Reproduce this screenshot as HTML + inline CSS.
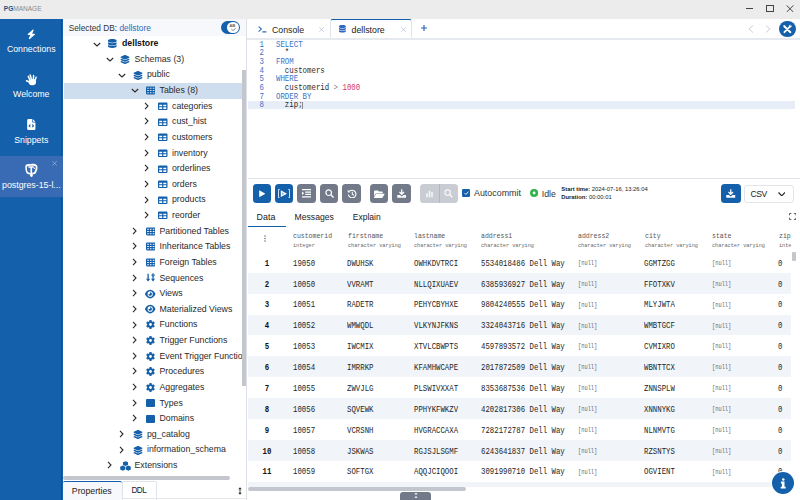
<!DOCTYPE html><html><head><meta charset="utf-8"><style>
*{box-sizing:border-box;margin:0;padding:0}
html,body{width:800px;height:500px;overflow:hidden;background:#fff}
body{position:relative;font-family:"Liberation Sans",sans-serif;color:#222;font-size:8.75px}
.a{position:absolute}
svg{display:block}
.t{position:absolute;white-space:nowrap;line-height:10px}
.m{font-family:"Liberation Mono",monospace}
.sitem{position:absolute;left:0;width:62.5px;text-align:center;font-size:8.75px;line-height:10px;color:#fff}
.tr{position:absolute;white-space:nowrap;font-size:8.75px;line-height:10px;color:#2a2a2a}
.btn{position:absolute;top:184.3px;width:18.6px;height:18.6px;border-radius:3.5px}
.bb{background:#1560aa}
.bg{background:#727a8a}
.hd{position:absolute;top:231px;font-family:"Liberation Mono",monospace;font-size:7.4px;line-height:9px;color:#555;transform:scaleX(0.88);transform-origin:0 0;white-space:nowrap}
.ty{position:absolute;top:242px;font-family:"Liberation Mono",monospace;font-size:6px;line-height:7px;color:#666;transform:scaleX(0.865);transform-origin:0 0;white-space:nowrap}
.c{position:absolute;font-family:"Liberation Mono",monospace;font-size:8.3px;line-height:9px;color:#1e1e1e;white-space:nowrap;transform:scaleX(0.885);transform-origin:0 0}
.nl{position:absolute;font-family:"Liberation Mono",monospace;font-size:6.3px;transform:scaleX(0.85);transform-origin:0 0;line-height:7px;color:#666;white-space:nowrap}
.rn{position:absolute;font-family:"Liberation Mono",monospace;font-size:8.3px;line-height:9px;color:#111;font-weight:bold;transform:scaleX(0.885);white-space:nowrap;text-align:center;width:20px}
.ed{position:absolute;font-family:"Liberation Mono",monospace;font-size:8.3px;line-height:8.7px;white-space:pre;transform:scaleX(0.89);transform-origin:0 0}
.kw{color:#3c73c7}
</style></head><body>
<div class="a" style="left:0;top:0;width:800px;height:18.75px;background:#ececec"></div>
<div class="t" style="left:3.8px;top:3.8px;font-size:6.6px;font-weight:bold;letter-spacing:-0.05px"><span style="color:#1f4f86">PG</span><span style="color:#8a8a8a;font-weight:normal">MANAGE</span></div>
<div class="a" style="left:746.2px;top:8px;width:7px;height:1.1px;background:#444"></div>
<div class="a" style="left:766px;top:4.6px;width:8px;height:7.6px;border:1.1px solid #444"></div>
<svg class="a" style="left:785.5px;top:4.8px" width="8" height="7.5" viewBox="0 0 8 7.5"><path d="M0.5 0.3L7.5 7.2M7.5 0.3L0.5 7.2" stroke="#444" stroke-width="1"/></svg>
<div class="a" style="left:0;top:18.75px;width:62.5px;height:481.25px;background:#1560aa"></div>
<div class="a" style="left:61.4px;top:18.75px;width:1.1px;height:481.25px;background:#0d4f98"></div>
<svg class="a" style="left:27px;top:29.3px" width="8.5" height="10.7" viewBox="0 0 448 512"><path fill="#fff" d="M349.4 44.6c5.9-13.7 1.4-29.7-10.6-38.5s-28.6-8-39.9 1.8l-256 224c-10 8.8-13.6 22.9-8.9 35.3S50.7 288 64 288H175.5L98.6 467.4c-5.9 13.7-1.4 29.7 10.6 38.5s28.6 8 39.9-1.8l256-224c10-8.8 13.6-22.9 8.9-35.3s-16.6-20.7-30-20.7H272.5L349.4 44.6z"/></svg>
<div class="sitem" style="top:44px">Connections</div>
<svg class="a" style="left:20px;top:70px" width="24" height="20" viewBox="20 70 24 20"><g stroke="#fff" stroke-linecap="round" fill="none"><path d="M30.2 81L28.3 76.4M31.6 80L30.2 75M33.3 80L33.6 75.6M34.9 81L36.1 77.3" stroke-width="1.5"/><path d="M30.5 82.6L26.6 80.8" stroke-width="1.7"/></g><ellipse cx="32.4" cy="82.2" rx="3.7" ry="3" transform="rotate(-12 32.4 82.2)" fill="#fff"/></svg>
<div class="sitem" style="top:89px">Welcome</div>
<svg class="a" style="left:27.3px;top:119px" width="8.6" height="11" viewBox="0 0 384 512"><path fill="#fff" d="M64 0C28.7 0 0 28.7 0 64V448c0 35.3 28.7 64 64 64H320c35.3 0 64-28.7 64-64V160H256c-17.7 0-32-14.3-32-32V0H64zM256 0V128H384L256 0zM153 289l-31 31 31 31c9.4 9.4 9.4 24.6 0 33.9s-24.6 9.4-33.9 0L71 337c-9.4-9.4-9.4-24.6 0-33.9l48-48c9.4-9.4 24.6-9.4 33.9 0s9.4 24.6 0 33.9zM265 255l48 48c9.4 9.4 9.4 24.6 0 33.9l-48 48c-9.4 9.4-24.6 9.4-33.9 0s-9.4-24.6 0-33.9l31-31-31-31c-9.4-9.4-9.4-24.6 0-33.9s24.6-9.4 33.9 0z"/></svg>
<div class="sitem" style="top:134.5px">Snippets</div>
<div class="a" style="left:0;top:155.6px;width:62.5px;height:41.4px;background:#386bb4"></div>
<svg class="a" style="left:52.4px;top:161px" width="5.2" height="4.8" viewBox="0 0 5 5"><path d="M0.3 0.3L4.7 4.7M4.7 0.3L0.3 4.7" stroke="#9bb3dc" stroke-width="0.8"/></svg>
<svg class="a" style="left:24px;top:163px" width="14" height="15" viewBox="24 163 14 15"><path fill="#fff" d="M25.3 166.6C25.3 164.2 28 163.7 30.6 164.2C32.2 163.5 36.6 163.6 37.3 166.1C37.9 168.6 37.1 171.1 35.9 172.9C35.1 174.1 34 174.3 33 174.1L32.7 176.1C32.4 177.4 30.6 177.4 30.3 176.1L30 174.6C28 174.6 26.7 173.9 26.1 172.1C25.4 170.1 25.2 168.1 25.3 166.6Z"/><path fill="#386bb4" d="M26.9 166.7C27.1 165.5 35.4 165.3 35.7 166.6C35.9 168.6 35.3 170.6 34.4 171.9C33.6 172.7 32.6 172.7 32.3 172.6L32 175.3H30.9L30.6 172.9C28.8 172.9 27.7 172.3 27.3 171.1C26.9 169.6 26.8 168.1 26.9 166.7Z"/><path fill="#fff" d="M28.4 166.3H33.8V167.7H32.1V176H30.4V167.7H28.4Z"/><circle cx="34.4" cy="168.2" r="0.7" fill="#fff"/></svg>
<div class="sitem" style="top:179.5px;text-align:left;left:2px;font-size:8.8px">postgres-15-l...</div>
<div class="a" style="left:62.5px;top:18.75px;width:183.5px;height:17px;background:#f6f8fc"></div>
<div class="t" style="left:68.7px;top:22.7px;color:#333;font-size:8.3px">Selected DB: <span style="color:#2e68b8">dellstore</span></div>
<div class="a" style="left:221px;top:20.7px;width:19.3px;height:13.7px;border-radius:7px;background:#1560aa"></div>
<div class="a" style="left:227.2px;top:21.9px;width:11.5px;height:11.3px;border-radius:6px;background:#fff"></div>
<div class="t" style="left:229.2px;top:22.6px;font-size:4.3px;line-height:5px;color:#666;font-weight:bold">AB</div>
<svg class="a" style="left:230.8px;top:27.5px" width="5" height="3" viewBox="0 0 5 3"><path d="M0.3 1L2 2.6 4.7 0.3" fill="none" stroke="#555" stroke-width="0.7"/></svg>
<div class="a" style="left:63.5px;top:82.9px;width:178.5px;height:15.7px;background:#cfdeee"></div>
<div class="a" style="left:62.5px;top:36px;width:179.5px;height:440px;overflow:hidden">
<svg class="a" style="left:30.9px;top:5.6px" width="8" height="5" viewBox="0 0 8 5"><path d="M0.8 1L4 4 7.2 1" fill="none" stroke="#2b2b2b" stroke-width="1.1"/></svg>
<svg class="a" style="left:45.8px;top:2.9px" width="8.6" height="9" viewBox="0 0 448 512" preserveAspectRatio="none"><path fill="#1560aa" d="M448 80v48c0 44.2-100.3 80-224 80S0 172.2 0 128V80C0 35.8 100.3 0 224 0S448 35.8 448 80zM393.2 214.7c20.8-7.4 39.9-16.9 54.8-28.6V288c0 44.2-100.3 80-224 80S0 332.2 0 288V186.1c14.9 11.8 34 21.2 54.8 28.6C99.7 230.7 159.5 240 224 240s124.3-9.3 169.2-25.3zM0 346.1c14.9 11.8 34 21.2 54.8 28.6C99.7 390.7 159.5 400 224 400s124.3-9.3 169.2-25.3c20.8-7.4 39.9-16.9 54.8-28.6V432c0 44.2-100.3 80-224 80S0 476.2 0 432V346.1z"/></svg>
<div class="tr" style="left:59.5px;top:2.2px;font-weight:bold;color:#111;">dellstore</div>
<svg class="a" style="left:43.4px;top:21.23px" width="8" height="5" viewBox="0 0 8 5"><path d="M0.8 1L4 4 7.2 1" fill="none" stroke="#2b2b2b" stroke-width="1.1"/></svg>
<svg class="a" style="left:57.8px;top:18.93px" width="10" height="9" viewBox="0 0 576 512" preserveAspectRatio="none"><path fill="#1560aa" d="M264.5 5.2c14.9-6.9 32.1-6.9 47 0l218.6 101c8.5 3.9 13.9 12.4 13.9 21.8s-5.4 17.9-13.9 21.8l-218.6 101c-14.9 6.9-32.1 6.9-47 0L45.9 149.8C37.4 145.8 32 137.3 32 128s5.4-17.9 13.9-21.8L264.5 5.2zM476.9 209.6l53.2 24.6c8.5 3.9 13.9 12.4 13.9 21.8s-5.4 17.9-13.9 21.8l-218.6 101c-14.9 6.9-32.1 6.9-47 0L45.9 277.8C37.4 273.8 32 265.3 32 256s5.4-17.9 13.9-21.8l53.2-24.6 152 70.2c23.4 10.8 50.4 10.8 73.8 0l152-70.2zm-152 198.2l152-70.2 53.2 24.6c8.5 3.9 13.9 12.4 13.9 21.8s-5.4 17.9-13.9 21.8l-218.6 101c-14.9 6.9-32.1 6.9-47 0L45.9 405.8C37.4 401.8 32 393.3 32 384s5.4-17.9 13.9-21.8l53.2-24.6 152 70.2c23.4 10.8 50.4 10.8 73.8 0z"/></svg>
<div class="tr" style="left:72.0px;top:17.82px;">Schemas (3)</div>
<svg class="a" style="left:55.9px;top:36.85px" width="8" height="5" viewBox="0 0 8 5"><path d="M0.8 1L4 4 7.2 1" fill="none" stroke="#2b2b2b" stroke-width="1.1"/></svg>
<svg class="a" style="left:70.3px;top:34.55px" width="10" height="9" viewBox="0 0 576 512" preserveAspectRatio="none"><path fill="#1560aa" d="M264.5 5.2c14.9-6.9 32.1-6.9 47 0l218.6 101c8.5 3.9 13.9 12.4 13.9 21.8s-5.4 17.9-13.9 21.8l-218.6 101c-14.9 6.9-32.1 6.9-47 0L45.9 149.8C37.4 145.8 32 137.3 32 128s5.4-17.9 13.9-21.8L264.5 5.2zM476.9 209.6l53.2 24.6c8.5 3.9 13.9 12.4 13.9 21.8s-5.4 17.9-13.9 21.8l-218.6 101c-14.9 6.9-32.1 6.9-47 0L45.9 277.8C37.4 273.8 32 265.3 32 256s5.4-17.9 13.9-21.8l53.2-24.6 152 70.2c23.4 10.8 50.4 10.8 73.8 0l152-70.2zm-152 198.2l152-70.2 53.2 24.6c8.5 3.9 13.9 12.4 13.9 21.8s-5.4 17.9-13.9 21.8l-218.6 101c-14.9 6.9-32.1 6.9-47 0L45.9 405.8C37.4 401.8 32 393.3 32 384s5.4-17.9 13.9-21.8l53.2-24.6 152 70.2c23.4 10.8 50.4 10.8 73.8 0z"/></svg>
<div class="tr" style="left:84.5px;top:33.45px;">public</div>
<svg class="a" style="left:68.4px;top:52.48px" width="8" height="5" viewBox="0 0 8 5"><path d="M0.8 1L4 4 7.2 1" fill="none" stroke="#2b2b2b" stroke-width="1.1"/></svg>
<svg class="a" style="left:83.1px;top:50.17px" width="9.6" height="9" viewBox="0 0 512 512" preserveAspectRatio="none"><path fill="#1560aa" d="M64 32C28.7 32 0 60.7 0 96V416c0 35.3 28.7 64 64 64H448c35.3 0 64-28.7 64-64V96c0-35.3-28.7-64-64-64H64zm88 64v64H64V96h88zm56 0h88v64H208V96zm240 0v64H360V96h88zM64 224h88v64H64V224zm232 0v64H208V224h88zm64 0h88v64H360V224zM152 352v64H64V352h88zm56 0h88v64H208V352zm240 0v64H360V352h88z"/></svg>
<div class="tr" style="left:97.0px;top:49.08px;">Tables (8)</div>
<svg class="a" style="left:81.8px;top:65.8px" width="5" height="8" viewBox="0 0 5 8"><path d="M1 0.8L4 4 1 7.2" fill="none" stroke="#2b2b2b" stroke-width="1.1"/></svg>
<svg class="a" style="left:95.6px;top:66.0px" width="9.5" height="8.5" viewBox="0 0 512 512" preserveAspectRatio="none"><path fill="#1560aa" d="M64 256V160H224v96H64zm0 64H224v96H64V320zm224 96V320H448v96H288zM448 256H288V160H448v96zM64 32C28.7 32 0 60.7 0 96V416c0 35.3 28.7 64 64 64H448c35.3 0 64-28.7 64-64V96c0-35.3-28.7-64-64-64H64z"/></svg>
<div class="tr" style="left:109.5px;top:64.7px;">categories</div>
<svg class="a" style="left:81.8px;top:81.42px" width="5" height="8" viewBox="0 0 5 8"><path d="M1 0.8L4 4 1 7.2" fill="none" stroke="#2b2b2b" stroke-width="1.1"/></svg>
<svg class="a" style="left:95.6px;top:81.62px" width="9.5" height="8.5" viewBox="0 0 512 512" preserveAspectRatio="none"><path fill="#1560aa" d="M64 256V160H224v96H64zm0 64H224v96H64V320zm224 96V320H448v96H288zM448 256H288V160H448v96zM64 32C28.7 32 0 60.7 0 96V416c0 35.3 28.7 64 64 64H448c35.3 0 64-28.7 64-64V96c0-35.3-28.7-64-64-64H64z"/></svg>
<div class="tr" style="left:109.5px;top:80.33px;">cust_hist</div>
<svg class="a" style="left:81.8px;top:97.05px" width="5" height="8" viewBox="0 0 5 8"><path d="M1 0.8L4 4 1 7.2" fill="none" stroke="#2b2b2b" stroke-width="1.1"/></svg>
<svg class="a" style="left:95.6px;top:97.25px" width="9.5" height="8.5" viewBox="0 0 512 512" preserveAspectRatio="none"><path fill="#1560aa" d="M64 256V160H224v96H64zm0 64H224v96H64V320zm224 96V320H448v96H288zM448 256H288V160H448v96zM64 32C28.7 32 0 60.7 0 96V416c0 35.3 28.7 64 64 64H448c35.3 0 64-28.7 64-64V96c0-35.3-28.7-64-64-64H64z"/></svg>
<div class="tr" style="left:109.5px;top:95.95px;">customers</div>
<svg class="a" style="left:81.8px;top:112.67px" width="5" height="8" viewBox="0 0 5 8"><path d="M1 0.8L4 4 1 7.2" fill="none" stroke="#2b2b2b" stroke-width="1.1"/></svg>
<svg class="a" style="left:95.6px;top:112.88px" width="9.5" height="8.5" viewBox="0 0 512 512" preserveAspectRatio="none"><path fill="#1560aa" d="M64 256V160H224v96H64zm0 64H224v96H64V320zm224 96V320H448v96H288zM448 256H288V160H448v96zM64 32C28.7 32 0 60.7 0 96V416c0 35.3 28.7 64 64 64H448c35.3 0 64-28.7 64-64V96c0-35.3-28.7-64-64-64H64z"/></svg>
<div class="tr" style="left:109.5px;top:111.58px;">inventory</div>
<svg class="a" style="left:81.8px;top:128.3px" width="5" height="8" viewBox="0 0 5 8"><path d="M1 0.8L4 4 1 7.2" fill="none" stroke="#2b2b2b" stroke-width="1.1"/></svg>
<svg class="a" style="left:95.6px;top:128.5px" width="9.5" height="8.5" viewBox="0 0 512 512" preserveAspectRatio="none"><path fill="#1560aa" d="M64 256V160H224v96H64zm0 64H224v96H64V320zm224 96V320H448v96H288zM448 256H288V160H448v96zM64 32C28.7 32 0 60.7 0 96V416c0 35.3 28.7 64 64 64H448c35.3 0 64-28.7 64-64V96c0-35.3-28.7-64-64-64H64z"/></svg>
<div class="tr" style="left:109.5px;top:127.2px;">orderlines</div>
<svg class="a" style="left:81.8px;top:143.93px" width="5" height="8" viewBox="0 0 5 8"><path d="M1 0.8L4 4 1 7.2" fill="none" stroke="#2b2b2b" stroke-width="1.1"/></svg>
<svg class="a" style="left:95.6px;top:144.12px" width="9.5" height="8.5" viewBox="0 0 512 512" preserveAspectRatio="none"><path fill="#1560aa" d="M64 256V160H224v96H64zm0 64H224v96H64V320zm224 96V320H448v96H288zM448 256H288V160H448v96zM64 32C28.7 32 0 60.7 0 96V416c0 35.3 28.7 64 64 64H448c35.3 0 64-28.7 64-64V96c0-35.3-28.7-64-64-64H64z"/></svg>
<div class="tr" style="left:109.5px;top:142.82px;">orders</div>
<svg class="a" style="left:81.8px;top:159.55px" width="5" height="8" viewBox="0 0 5 8"><path d="M1 0.8L4 4 1 7.2" fill="none" stroke="#2b2b2b" stroke-width="1.1"/></svg>
<svg class="a" style="left:95.6px;top:159.75px" width="9.5" height="8.5" viewBox="0 0 512 512" preserveAspectRatio="none"><path fill="#1560aa" d="M64 256V160H224v96H64zm0 64H224v96H64V320zm224 96V320H448v96H288zM448 256H288V160H448v96zM64 32C28.7 32 0 60.7 0 96V416c0 35.3 28.7 64 64 64H448c35.3 0 64-28.7 64-64V96c0-35.3-28.7-64-64-64H64z"/></svg>
<div class="tr" style="left:109.5px;top:158.45px;">products</div>
<svg class="a" style="left:81.8px;top:175.18px" width="5" height="8" viewBox="0 0 5 8"><path d="M1 0.8L4 4 1 7.2" fill="none" stroke="#2b2b2b" stroke-width="1.1"/></svg>
<svg class="a" style="left:95.6px;top:175.38px" width="9.5" height="8.5" viewBox="0 0 512 512" preserveAspectRatio="none"><path fill="#1560aa" d="M64 256V160H224v96H64zm0 64H224v96H64V320zm224 96V320H448v96H288zM448 256H288V160H448v96zM64 32C28.7 32 0 60.7 0 96V416c0 35.3 28.7 64 64 64H448c35.3 0 64-28.7 64-64V96c0-35.3-28.7-64-64-64H64z"/></svg>
<div class="tr" style="left:109.5px;top:174.07px;">reorder</div>
<svg class="a" style="left:69.3px;top:190.8px" width="5" height="8" viewBox="0 0 5 8"><path d="M1 0.8L4 4 1 7.2" fill="none" stroke="#2b2b2b" stroke-width="1.1"/></svg>
<svg class="a" style="left:83.1px;top:190.8px" width="9.6" height="9" viewBox="0 0 512 512" preserveAspectRatio="none"><path fill="#1560aa" d="M64 32C28.7 32 0 60.7 0 96V416c0 35.3 28.7 64 64 64H448c35.3 0 64-28.7 64-64V96c0-35.3-28.7-64-64-64H64zm88 64v64H64V96h88zm56 0h88v64H208V96zm240 0v64H360V96h88zM64 224h88v64H64V224zm232 0v64H208V224h88zm64 0h88v64H360V224zM152 352v64H64V352h88zm56 0h88v64H208V352zm240 0v64H360V352h88z"/></svg>
<div class="tr" style="left:97.0px;top:189.7px;">Partitioned Tables</div>
<svg class="a" style="left:69.3px;top:206.43px" width="5" height="8" viewBox="0 0 5 8"><path d="M1 0.8L4 4 1 7.2" fill="none" stroke="#2b2b2b" stroke-width="1.1"/></svg>
<svg class="a" style="left:83.1px;top:206.43px" width="9.6" height="9" viewBox="0 0 512 512" preserveAspectRatio="none"><path fill="#1560aa" d="M64 32C28.7 32 0 60.7 0 96V416c0 35.3 28.7 64 64 64H448c35.3 0 64-28.7 64-64V96c0-35.3-28.7-64-64-64H64zm88 64v64H64V96h88zm56 0h88v64H208V96zm240 0v64H360V96h88zM64 224h88v64H64V224zm232 0v64H208V224h88zm64 0h88v64H360V224zM152 352v64H64V352h88zm56 0h88v64H208V352zm240 0v64H360V352h88z"/></svg>
<div class="tr" style="left:97.0px;top:205.32px;">Inheritance Tables</div>
<svg class="a" style="left:69.3px;top:222.05px" width="5" height="8" viewBox="0 0 5 8"><path d="M1 0.8L4 4 1 7.2" fill="none" stroke="#2b2b2b" stroke-width="1.1"/></svg>
<svg class="a" style="left:83.1px;top:222.05px" width="9.6" height="9" viewBox="0 0 512 512" preserveAspectRatio="none"><path fill="#1560aa" d="M64 32C28.7 32 0 60.7 0 96V416c0 35.3 28.7 64 64 64H448c35.3 0 64-28.7 64-64V96c0-35.3-28.7-64-64-64H64zm88 64v64H64V96h88zm56 0h88v64H208V96zm240 0v64H360V96h88zM64 224h88v64H64V224zm232 0v64H208V224h88zm64 0h88v64H360V224zM152 352v64H64V352h88zm56 0h88v64H208V352zm240 0v64H360V352h88z"/></svg>
<div class="tr" style="left:97.0px;top:220.95px;">Foreign Tables</div>
<svg class="a" style="left:69.3px;top:237.68px" width="5" height="8" viewBox="0 0 5 8"><path d="M1 0.8L4 4 1 7.2" fill="none" stroke="#2b2b2b" stroke-width="1.1"/></svg>
<svg class="a" style="left:83.1px;top:236.97px" width="10" height="10" viewBox="0 0 10 10"><path d="M2.1 0.8V7.6" fill="none" stroke="#1560aa" stroke-width="1.3"/><path d="M0 5.8H4.2L2.1 8.6z" fill="#1560aa"/><path d="M7 0.8V7.6" fill="none" stroke="#1560aa" stroke-width="1.1"/><circle cx="7.1" cy="2.2" r="1.2" fill="none" stroke="#1560aa" stroke-width="0.9"/><path d="M5 5.8H9.1L7 8.6z" fill="#1560aa"/></svg>
<div class="tr" style="left:97.0px;top:236.57px;">Sequences</div>
<svg class="a" style="left:69.3px;top:253.3px" width="5" height="8" viewBox="0 0 5 8"><path d="M1 0.8L4 4 1 7.2" fill="none" stroke="#2b2b2b" stroke-width="1.1"/></svg>
<svg class="a" style="left:82.9px;top:252.6px" width="10.4" height="10" viewBox="0 0 576 512" preserveAspectRatio="none"><path fill="#1560aa" d="M288 32c-80.8 0-145.5 36.8-192.6 80.6C48.6 156 17.3 208 2.5 243.7c-3.3 7.9-3.3 16.7 0 24.6C17.3 304 48.6 356 95.4 399.4C142.5 443.2 207.2 480 288 480s145.5-36.8 192.6-80.6c46.8-43.5 78.1-95.4 93-131.1c3.3-7.9 3.3-16.7 0-24.6c-14.9-35.7-46.2-87.7-93-131.1C433.5 68.8 368.8 32 288 32zM144 256a144 144 0 1 1 288 0 144 144 0 1 1 -288 0zm144-64c0 35.3-28.7 64-64 64c-7.1 0-13.9-1.2-20.3-3.3c-5.5-1.8-11.9 1.6-11.7 7.4c.3 6.9 1.3 13.8 3.2 20.7c13.7 51.2 66.4 81.6 117.6 67.9s81.6-66.4 67.9-117.6c-11.1-41.5-47.8-69.4-88.6-71.1c-5.8-.2-9.2 6.1-7.4 11.7c2.100 6.4 3.3 13.2 3.3 20.3z"/></svg>
<div class="tr" style="left:97.0px;top:252.2px;">Views</div>
<svg class="a" style="left:69.3px;top:268.93px" width="5" height="8" viewBox="0 0 5 8"><path d="M1 0.8L4 4 1 7.2" fill="none" stroke="#2b2b2b" stroke-width="1.1"/></svg>
<svg class="a" style="left:82.9px;top:268.23px" width="10.4" height="10" viewBox="0 0 576 512" preserveAspectRatio="none"><path fill="#1560aa" d="M288 32c-80.8 0-145.5 36.8-192.6 80.6C48.6 156 17.3 208 2.5 243.7c-3.3 7.9-3.3 16.7 0 24.6C17.3 304 48.6 356 95.4 399.4C142.5 443.2 207.2 480 288 480s145.5-36.8 192.6-80.6c46.8-43.5 78.1-95.4 93-131.1c3.3-7.9 3.3-16.7 0-24.6c-14.9-35.7-46.2-87.7-93-131.1C433.5 68.8 368.8 32 288 32zM144 256a144 144 0 1 1 288 0 144 144 0 1 1 -288 0zm144-64c0 35.3-28.7 64-64 64c-7.1 0-13.9-1.2-20.3-3.3c-5.5-1.8-11.9 1.6-11.7 7.4c.3 6.9 1.3 13.8 3.2 20.7c13.7 51.2 66.4 81.6 117.6 67.9s81.6-66.4 67.9-117.6c-11.1-41.5-47.8-69.4-88.6-71.1c-5.8-.2-9.2 6.1-7.4 11.7c2.100 6.4 3.3 13.2 3.3 20.3z"/></svg>
<div class="tr" style="left:97.0px;top:267.82px;">Materialized Views</div>
<svg class="a" style="left:69.3px;top:284.55px" width="5" height="8" viewBox="0 0 5 8"><path d="M1 0.8L4 4 1 7.2" fill="none" stroke="#2b2b2b" stroke-width="1.1"/></svg>
<svg class="a" style="left:83.6px;top:284.45px" width="9" height="9" viewBox="0 0 512 512" preserveAspectRatio="none"><path fill="#1560aa" d="M495.9 166.6c3.2 8.7 .5 18.4-6.4 24.6l-43.3 39.4c1.1 8.3 1.7 16.8 1.7 25.4s-.6 17.1-1.7 25.4l43.3 39.4c6.9 6.2 9.6 15.9 6.4 24.6c-4.4 11.9-9.7 23.3-15.8 34.3l-4.7 8.1c-6.6 11-14 21.4-22.1 31.2c-5.9 7.2-15.7 9.6-24.5 6.8l-55.7-17.7c-13.4 10.3-28.200 18.9-44 25.4l-12.5 57.1c-2 9.1-9 16.3-18.2 17.8c-13.8 2.3-28 3.5-42.5 3.5s-28.7-1.2-42.5-3.5c-9.2-1.5-16.2-8.7-18.2-17.8l-12.5-57.1c-15.8-6.5-30.6-15.1-44-25.4L83.1 425.9c-8.8 2.8-18.6 .3-24.5-6.8c-8.1-9.8-15.5-20.2-22.1-31.2l-4.7-8.1c-6.1-11-11.4-22.4-15.8-34.3c-3.2-8.7-.5-18.4 6.4-24.6l43.3-39.4C64.6 273.1 64 264.6 64 256s.6-17.1 1.7-25.4L22.4 191.2c-6.9-6.2-9.6-15.9-6.4-24.6c4.4-11.9 9.7-23.3 15.8-34.3l4.7-8.1c6.6-11 14-21.4 22.1-31.2c5.9-7.2 15.7-9.6 24.5-6.8l55.7 17.7c13.4-10.3 28.2-18.9 44-25.4l12.5-57.1c2-9.1 9-16.3 18.2-17.8C227.3 1.2 241.5 0 256 0s28.7 1.2 42.5 3.5c9.2 1.5 16.2 8.7 18.2 17.8l12.5 57.1c15.8 6.5 30.6 15.1 44 25.4l55.7-17.7c8.8-2.8 18.6-.3 24.5 6.8c8.1 9.8 15.5 20.2 22.1 31.2l4.7 8.1c6.1 11 11.4 22.4 15.8 34.3zM256 336a80 80 0 1 0 0-160 80 80 0 1 0 0 160z"/></svg>
<div class="tr" style="left:97.0px;top:283.45px;">Functions</div>
<svg class="a" style="left:69.3px;top:300.18px" width="5" height="8" viewBox="0 0 5 8"><path d="M1 0.8L4 4 1 7.2" fill="none" stroke="#2b2b2b" stroke-width="1.1"/></svg>
<svg class="a" style="left:83.6px;top:300.07px" width="9" height="9" viewBox="0 0 512 512" preserveAspectRatio="none"><path fill="#1560aa" d="M495.9 166.6c3.2 8.7 .5 18.4-6.4 24.6l-43.3 39.4c1.1 8.3 1.7 16.8 1.7 25.4s-.6 17.1-1.7 25.4l43.3 39.4c6.9 6.2 9.6 15.9 6.4 24.6c-4.4 11.9-9.7 23.3-15.8 34.3l-4.7 8.1c-6.6 11-14 21.4-22.1 31.2c-5.9 7.2-15.7 9.6-24.5 6.8l-55.7-17.7c-13.4 10.3-28.200 18.9-44 25.4l-12.5 57.1c-2 9.1-9 16.3-18.2 17.8c-13.8 2.3-28 3.5-42.5 3.5s-28.7-1.2-42.5-3.5c-9.2-1.5-16.2-8.7-18.2-17.8l-12.5-57.1c-15.8-6.5-30.6-15.1-44-25.4L83.1 425.9c-8.8 2.8-18.6 .3-24.5-6.8c-8.1-9.8-15.5-20.2-22.1-31.2l-4.7-8.1c-6.1-11-11.4-22.4-15.8-34.3c-3.2-8.7-.5-18.4 6.4-24.6l43.3-39.4C64.6 273.1 64 264.6 64 256s.6-17.1 1.7-25.4L22.4 191.2c-6.9-6.2-9.6-15.9-6.4-24.6c4.4-11.9 9.7-23.3 15.8-34.3l4.7-8.1c6.6-11 14-21.4 22.1-31.2c5.9-7.2 15.7-9.6 24.5-6.8l55.7 17.7c13.4-10.3 28.2-18.9 44-25.4l12.5-57.1c2-9.1 9-16.3 18.2-17.8C227.3 1.2 241.5 0 256 0s28.7 1.2 42.5 3.5c9.2 1.5 16.2 8.7 18.2 17.8l12.5 57.1c15.8 6.5 30.6 15.1 44 25.4l55.7-17.7c8.8-2.8 18.6-.3 24.5 6.8c8.1 9.8 15.5 20.2 22.1 31.2l4.7 8.1c6.1 11 11.4 22.4 15.8 34.3zM256 336a80 80 0 1 0 0-160 80 80 0 1 0 0 160z"/></svg>
<div class="tr" style="left:97.0px;top:299.07px;">Trigger Functions</div>
<svg class="a" style="left:69.3px;top:315.8px" width="5" height="8" viewBox="0 0 5 8"><path d="M1 0.8L4 4 1 7.2" fill="none" stroke="#2b2b2b" stroke-width="1.1"/></svg>
<svg class="a" style="left:83.6px;top:315.7px" width="9" height="9" viewBox="0 0 512 512" preserveAspectRatio="none"><path fill="#1560aa" d="M495.9 166.6c3.2 8.7 .5 18.4-6.4 24.6l-43.3 39.4c1.1 8.3 1.7 16.8 1.7 25.4s-.6 17.1-1.7 25.4l43.3 39.4c6.9 6.2 9.6 15.9 6.4 24.6c-4.4 11.9-9.7 23.3-15.8 34.3l-4.7 8.1c-6.6 11-14 21.4-22.1 31.2c-5.9 7.2-15.7 9.6-24.5 6.8l-55.7-17.7c-13.4 10.3-28.200 18.9-44 25.4l-12.5 57.1c-2 9.1-9 16.3-18.2 17.8c-13.8 2.3-28 3.5-42.5 3.5s-28.7-1.2-42.5-3.5c-9.2-1.5-16.2-8.7-18.2-17.8l-12.5-57.1c-15.8-6.5-30.6-15.1-44-25.4L83.1 425.9c-8.8 2.8-18.6 .3-24.5-6.8c-8.1-9.8-15.5-20.2-22.1-31.2l-4.7-8.1c-6.1-11-11.4-22.4-15.8-34.3c-3.2-8.7-.5-18.4 6.4-24.6l43.3-39.4C64.6 273.1 64 264.6 64 256s.6-17.1 1.7-25.4L22.4 191.2c-6.9-6.2-9.6-15.9-6.4-24.6c4.4-11.9 9.7-23.3 15.8-34.3l4.7-8.1c6.6-11 14-21.4 22.1-31.2c5.9-7.2 15.7-9.6 24.5-6.8l55.7 17.7c13.4-10.3 28.2-18.9 44-25.4l12.5-57.1c2-9.1 9-16.3 18.2-17.8C227.3 1.2 241.5 0 256 0s28.7 1.2 42.5 3.5c9.2 1.5 16.2 8.7 18.2 17.8l12.5 57.1c15.8 6.5 30.6 15.1 44 25.4l55.7-17.7c8.8-2.8 18.6-.3 24.5 6.8c8.1 9.8 15.5 20.2 22.1 31.2l4.7 8.1c6.1 11 11.4 22.4 15.8 34.3zM256 336a80 80 0 1 0 0-160 80 80 0 1 0 0 160z"/></svg>
<div class="tr" style="left:97.0px;top:314.7px;">Event Trigger Functions</div>
<svg class="a" style="left:69.3px;top:331.43px" width="5" height="8" viewBox="0 0 5 8"><path d="M1 0.8L4 4 1 7.2" fill="none" stroke="#2b2b2b" stroke-width="1.1"/></svg>
<svg class="a" style="left:83.6px;top:331.32px" width="9" height="9" viewBox="0 0 512 512" preserveAspectRatio="none"><path fill="#1560aa" d="M495.9 166.6c3.2 8.7 .5 18.4-6.4 24.6l-43.3 39.4c1.1 8.3 1.7 16.8 1.7 25.4s-.6 17.1-1.7 25.4l43.3 39.4c6.9 6.2 9.6 15.9 6.4 24.6c-4.4 11.9-9.7 23.3-15.8 34.3l-4.7 8.1c-6.6 11-14 21.4-22.1 31.2c-5.9 7.2-15.7 9.6-24.5 6.8l-55.7-17.7c-13.4 10.3-28.200 18.9-44 25.4l-12.5 57.1c-2 9.1-9 16.3-18.2 17.8c-13.8 2.3-28 3.5-42.5 3.5s-28.7-1.2-42.5-3.5c-9.2-1.5-16.2-8.7-18.2-17.8l-12.5-57.1c-15.8-6.5-30.6-15.1-44-25.4L83.1 425.9c-8.8 2.8-18.6 .3-24.5-6.8c-8.1-9.8-15.5-20.2-22.1-31.2l-4.7-8.1c-6.1-11-11.4-22.4-15.8-34.3c-3.2-8.7-.5-18.4 6.4-24.6l43.3-39.4C64.6 273.1 64 264.6 64 256s.6-17.1 1.7-25.4L22.4 191.2c-6.9-6.2-9.6-15.9-6.4-24.6c4.4-11.9 9.7-23.3 15.8-34.3l4.7-8.1c6.6-11 14-21.4 22.1-31.2c5.9-7.2 15.7-9.6 24.5-6.8l55.7 17.7c13.4-10.3 28.2-18.9 44-25.4l12.5-57.1c2-9.1 9-16.3 18.2-17.8C227.3 1.2 241.5 0 256 0s28.7 1.2 42.5 3.5c9.2 1.5 16.2 8.7 18.2 17.8l12.5 57.1c15.8 6.5 30.6 15.1 44 25.4l55.7-17.7c8.8-2.8 18.6-.3 24.5 6.8c8.1 9.8 15.5 20.2 22.1 31.2l4.7 8.1c6.1 11 11.4 22.4 15.8 34.3zM256 336a80 80 0 1 0 0-160 80 80 0 1 0 0 160z"/></svg>
<div class="tr" style="left:97.0px;top:330.32px;">Procedures</div>
<svg class="a" style="left:69.3px;top:347.05px" width="5" height="8" viewBox="0 0 5 8"><path d="M1 0.8L4 4 1 7.2" fill="none" stroke="#2b2b2b" stroke-width="1.1"/></svg>
<svg class="a" style="left:83.6px;top:346.95px" width="9" height="9" viewBox="0 0 512 512" preserveAspectRatio="none"><path fill="#1560aa" d="M495.9 166.6c3.2 8.7 .5 18.4-6.4 24.6l-43.3 39.4c1.1 8.3 1.7 16.8 1.7 25.4s-.6 17.1-1.7 25.4l43.3 39.4c6.9 6.2 9.6 15.9 6.4 24.6c-4.4 11.9-9.7 23.3-15.8 34.3l-4.7 8.1c-6.6 11-14 21.4-22.1 31.2c-5.9 7.2-15.7 9.6-24.5 6.8l-55.7-17.7c-13.4 10.3-28.200 18.9-44 25.4l-12.5 57.1c-2 9.1-9 16.3-18.2 17.8c-13.8 2.3-28 3.5-42.5 3.5s-28.7-1.2-42.5-3.5c-9.2-1.5-16.2-8.7-18.2-17.8l-12.5-57.1c-15.8-6.5-30.6-15.1-44-25.4L83.1 425.9c-8.8 2.8-18.6 .3-24.5-6.8c-8.1-9.8-15.5-20.2-22.1-31.2l-4.7-8.1c-6.1-11-11.4-22.4-15.8-34.3c-3.2-8.7-.5-18.4 6.4-24.6l43.3-39.4C64.6 273.1 64 264.6 64 256s.6-17.1 1.7-25.4L22.4 191.2c-6.9-6.2-9.6-15.9-6.4-24.6c4.4-11.9 9.7-23.3 15.8-34.3l4.7-8.1c6.6-11 14-21.4 22.1-31.2c5.9-7.2 15.7-9.6 24.5-6.8l55.7 17.7c13.4-10.3 28.2-18.9 44-25.4l12.5-57.1c2-9.1 9-16.3 18.2-17.8C227.3 1.2 241.5 0 256 0s28.7 1.2 42.5 3.5c9.2 1.5 16.2 8.7 18.2 17.8l12.5 57.1c15.8 6.5 30.6 15.1 44 25.4l55.7-17.7c8.8-2.8 18.6-.3 24.5 6.8c8.1 9.8 15.5 20.2 22.1 31.2l4.7 8.1c6.1 11 11.4 22.4 15.8 34.3zM256 336a80 80 0 1 0 0-160 80 80 0 1 0 0 160z"/></svg>
<div class="tr" style="left:97.0px;top:345.95px;">Aggregates</div>
<svg class="a" style="left:69.3px;top:362.68px" width="5" height="8" viewBox="0 0 5 8"><path d="M1 0.8L4 4 1 7.2" fill="none" stroke="#2b2b2b" stroke-width="1.1"/></svg>
<div class="a" style="left:83.9px;top:362.98px;width:8.2px;height:8.2px;border-radius:1px;background:#1560aa"></div>
<div class="tr" style="left:97.0px;top:361.57px;">Types</div>
<svg class="a" style="left:69.3px;top:378.3px" width="5" height="8" viewBox="0 0 5 8"><path d="M1 0.8L4 4 1 7.2" fill="none" stroke="#2b2b2b" stroke-width="1.1"/></svg>
<div class="a" style="left:83.9px;top:378.6px;width:8.2px;height:8.2px;border-radius:1px;background:#1560aa"></div>
<div class="tr" style="left:97.0px;top:377.2px;">Domains</div>
<svg class="a" style="left:56.8px;top:393.93px" width="5" height="8" viewBox="0 0 5 8"><path d="M1 0.8L4 4 1 7.2" fill="none" stroke="#2b2b2b" stroke-width="1.1"/></svg>
<svg class="a" style="left:70.3px;top:393.93px" width="10" height="9" viewBox="0 0 576 512" preserveAspectRatio="none"><path fill="#1560aa" d="M264.5 5.2c14.9-6.9 32.1-6.9 47 0l218.6 101c8.5 3.9 13.9 12.4 13.9 21.8s-5.4 17.9-13.9 21.8l-218.6 101c-14.9 6.9-32.1 6.9-47 0L45.9 149.8C37.4 145.8 32 137.3 32 128s5.4-17.9 13.9-21.8L264.5 5.2zM476.9 209.6l53.2 24.6c8.5 3.9 13.9 12.4 13.9 21.8s-5.4 17.9-13.9 21.8l-218.6 101c-14.9 6.9-32.1 6.9-47 0L45.9 277.8C37.4 273.8 32 265.3 32 256s5.4-17.9 13.9-21.8l53.2-24.6 152 70.2c23.4 10.8 50.4 10.8 73.8 0l152-70.2zm-152 198.2l152-70.2 53.2 24.6c8.5 3.9 13.9 12.4 13.9 21.8s-5.4 17.9-13.9 21.8l-218.6 101c-14.9 6.9-32.1 6.9-47 0L45.9 405.8C37.4 401.8 32 393.3 32 384s5.4-17.9 13.9-21.8l53.2-24.6 152 70.2c23.4 10.8 50.4 10.8 73.8 0z"/></svg>
<div class="tr" style="left:84.5px;top:392.82px;">pg_catalog</div>
<svg class="a" style="left:56.8px;top:409.55px" width="5" height="8" viewBox="0 0 5 8"><path d="M1 0.8L4 4 1 7.2" fill="none" stroke="#2b2b2b" stroke-width="1.1"/></svg>
<svg class="a" style="left:70.3px;top:409.55px" width="10" height="9" viewBox="0 0 576 512" preserveAspectRatio="none"><path fill="#1560aa" d="M264.5 5.2c14.9-6.9 32.1-6.9 47 0l218.6 101c8.5 3.9 13.9 12.4 13.9 21.8s-5.4 17.9-13.9 21.8l-218.6 101c-14.9 6.9-32.1 6.9-47 0L45.9 149.8C37.4 145.8 32 137.3 32 128s5.4-17.9 13.9-21.8L264.5 5.2zM476.9 209.6l53.2 24.6c8.5 3.9 13.9 12.4 13.9 21.8s-5.4 17.9-13.9 21.8l-218.6 101c-14.9 6.9-32.1 6.9-47 0L45.9 277.8C37.4 273.8 32 265.3 32 256s5.4-17.9 13.9-21.8l53.2-24.6 152 70.2c23.4 10.8 50.4 10.8 73.8 0l152-70.2zm-152 198.2l152-70.2 53.2 24.6c8.5 3.9 13.9 12.4 13.9 21.8s-5.4 17.9-13.9 21.8l-218.6 101c-14.9 6.9-32.1 6.9-47 0L45.9 405.8C37.4 401.8 32 393.3 32 384s5.4-17.9 13.9-21.8l53.2-24.6 152 70.2c23.4 10.8 50.4 10.8 73.8 0z"/></svg>
<div class="tr" style="left:84.5px;top:408.45px;">information_schema</div>
<svg class="a" style="left:44.3px;top:425.18px" width="5" height="8" viewBox="0 0 5 8"><path d="M1 0.8L4 4 1 7.2" fill="none" stroke="#2b2b2b" stroke-width="1.1"/></svg>
<svg class="a" style="left:57.6px;top:424.88px" width="11" height="10" viewBox="0 0 11 10"><path fill="#1560aa" d="M5.5 0.2L8 1.3V4L5.5 5.1 3 4V1.3zM2.7 4.6L5.2 5.7V8.6L2.7 9.8 0.2 8.6V5.7zM8.3 4.6L10.8 5.7V8.6L8.3 9.8 5.8 8.6V5.7z"/></svg>
<div class="tr" style="left:72.0px;top:424.07px;">Extensions</div>
</div>
<div class="a" style="left:242px;top:70.2px;width:4.1px;height:315.5px;background:#c3c7cd"></div>
<div class="a" style="left:63px;top:476px;width:167px;height:3.8px;border-radius:2px;background:#c3c7cd"></div>
<div class="a" style="left:62.5px;top:481.2px;width:59.7px;height:19px;background:#f6f8fc;border-top:1.2px solid #1560aa;border-radius:2px 2px 0 0"></div>
<div class="a" style="left:122.2px;top:481.2px;width:35px;height:19px;border:1px solid #dfe3ea;border-bottom:none;border-radius:2px 2px 0 0"></div>
<div class="a" style="left:122.2px;top:497.5px;width:124px;height:1px;background:#e3e6eb"></div>
<div class="t" style="left:71.8px;top:486px;color:#222">Properties</div>
<div class="t" style="left:131.5px;top:486px;color:#222;font-size:8.2px;letter-spacing:-0.6px">DDL</div>
<svg class="a" style="left:237.7px;top:486.8px" width="4" height="8" viewBox="0 0 4 8"><path d="M2 1V7" fill="none" stroke="#333" stroke-width="0.9"/><path d="M0.2 2.3L2 0.2 3.8 2.3zM0.2 5.7L2 7.8 3.8 5.7z" fill="#333"/></svg>
<div class="a" style="left:246.2px;top:18.75px;width:1px;height:481.25px;background:#dde1e7"></div>
<svg class="a" style="left:257.5px;top:26.2px" width="9" height="7" viewBox="0 0 9 7"><path d="M0.6 0.6L3.4 3.1 0.6 5.6M4.3 5.9H8.4" fill="none" stroke="#2f68c0" stroke-width="1.1"/></svg>
<div class="t" style="left:272px;top:25px;color:#1e1e1e;font-size:8.75px">Console</div>
<svg class="a" style="left:319.3px;top:26.5px" width="5.2" height="5.2" viewBox="0 0 5 5"><path d="M0.3 0.3L4.7 4.7M4.7 0.3L0.3 4.7" stroke="#b8c6dc" stroke-width="0.8"/></svg>
<div class="a" style="left:330.3px;top:19.1px;width:81.5px;height:20px;background:#fff;border:1px solid #dfe3ea;border-top:1.3px solid #1560aa;border-bottom:none;border-radius:2.5px 2.5px 0 0"></div>
<div class="a" style="left:247.2px;top:37.75px;width:552.8px;height:1.9px;background:#e6e9ee"></div>
<svg class="a" style="left:339.3px;top:25.4px" width="6.8" height="7.6" viewBox="0 0 448 512" preserveAspectRatio="none"><path fill="#2f68c0" d="M448 80v48c0 44.2-100.3 80-224 80S0 172.2 0 128V80C0 35.8 100.3 0 224 0S448 35.8 448 80zM393.2 214.7c20.8-7.4 39.9-16.9 54.8-28.6V288c0 44.2-100.3 80-224 80S0 332.2 0 288V186.1c14.9 11.8 34 21.2 54.8 28.6C99.7 230.7 159.5 240 224 240s124.3-9.3 169.2-25.3zM0 346.1c14.9 11.8 34 21.2 54.8 28.6C99.7 390.7 159.5 400 224 400s124.3-9.3 169.2-25.3c20.8-7.4 39.9-16.9 54.8-28.6V432c0 44.2-100.3 80-224 80S0 476.2 0 432V346.1z"/></svg>
<div class="t" style="left:351.6px;top:25px;color:#1a1a1a;font-size:8.75px">dellstore</div>
<svg class="a" style="left:400.8px;top:26.5px" width="5.2" height="5.2" viewBox="0 0 5 5"><path d="M0.3 0.3L4.7 4.7M4.7 0.3L0.3 4.7" stroke="#b8c6dc" stroke-width="0.8"/></svg>
<svg class="a" style="left:421px;top:25.2px" width="6" height="6" viewBox="0 0 6 6"><path d="M3 0V6M0 3H6" stroke="#2f68c0" stroke-width="1.2"/></svg>
<svg class="a" style="left:747.5px;top:25px" width="6" height="8" viewBox="0 0 6 8"><path d="M5 0.5L1 4 5 7.5" fill="none" stroke="#c5cad3" stroke-width="0.9"/></svg>
<svg class="a" style="left:764.5px;top:25px" width="6" height="8" viewBox="0 0 6 8"><path d="M1 0.5L5 4 1 7.5" fill="none" stroke="#c5cad3" stroke-width="0.9"/></svg>
<div class="a" style="left:779px;top:20.7px;width:16.8px;height:16.6px;border-radius:50%;background:#1560aa"></div>
<svg class="a" style="left:782px;top:24px" width="10" height="10" viewBox="782 24 10 10"><path d="M784.2 26.2L790.4 32.2M790.2 26.4L784.4 32.2" stroke="#fff" stroke-width="1.9" stroke-linecap="round"/><path d="M783.4 25.4L785.2 25.6 785 27.2z" fill="#fff"/><circle cx="790.4" cy="26" r="1.3" fill="#fff"/><circle cx="791" cy="25.4" r="0.55" fill="#1560aa"/></svg>
<div class="a" style="left:248px;top:100.8px;width:547px;height:8px;background:#e8eef7"></div>
<div class="ed" style="left:255.4px;top:40.50px;width:10px;text-align:right;color:#3c73c7">1</div>
<div class="ed" style="left:275.5px;top:40.50px;color:#3c73c7">SELECT</div>
<div class="ed" style="left:255.4px;top:49.20px;width:10px;text-align:right;color:#3c73c7">2</div>
<div class="ed" style="left:275.5px;top:49.20px;color:#2a2a2a">  *</div>
<div class="ed" style="left:255.4px;top:57.90px;width:10px;text-align:right;color:#3c73c7">3</div>
<div class="ed" style="left:275.5px;top:57.90px;color:#3c73c7">FROM</div>
<div class="ed" style="left:255.4px;top:66.60px;width:10px;text-align:right;color:#3c73c7">4</div>
<div class="ed" style="left:275.5px;top:66.60px;color:#2a2a2a">  customers</div>
<div class="ed" style="left:255.4px;top:75.30px;width:10px;text-align:right;color:#3c73c7">5</div>
<div class="ed" style="left:275.5px;top:75.30px;color:#3c73c7">WHERE</div>
<div class="ed" style="left:255.4px;top:84.00px;width:10px;text-align:right;color:#3c73c7">6</div>
<div class="ed" style="left:275.5px;top:84.00px;color:#2a2a2a">  customerid <span style="color:#888">&gt;</span> <span style="color:#d6336c">1000</span></div>
<div class="ed" style="left:255.4px;top:92.70px;width:10px;text-align:right;color:#3c73c7">7</div>
<div class="ed" style="left:275.5px;top:92.70px;color:#3c73c7">ORDER BY</div>
<div class="ed" style="left:255.4px;top:101.40px;width:10px;text-align:right;color:#3c73c7">8</div>
<div class="ed" style="left:275.5px;top:101.40px;color:#2a2a2a">  zip;</div>
<div class="a" style="left:302.4px;top:101.8px;width:0.6px;height:6.8px;background:#888"></div>
<div class="a" style="left:248px;top:177.6px;width:552px;height:1.2px;background:#dfe3ea"></div>
<div class="btn bb" style="left:252.8px;width:18.6px"></div>
<svg class="a" style="left:258.7px;top:189.7px" width="6.5" height="7.4" viewBox="0 0 6.5 7.4"><path d="M0.2 0.2L6.4 3.7 0.2 7.2z" fill="#fff"/></svg>
<div class="btn bb" style="left:274.5px;width:18.6px"></div>
<svg class="a" style="left:278.3px;top:188.5px" width="12" height="9.3" viewBox="0 0 12 9.3"><path d="M1.8 0.4H0.5V8.9H1.8M10.2 0.4H11.5V8.9H10.2" fill="none" stroke="#fff" stroke-width="0.8"/><path d="M2.8 1.3L9 4.65 2.8 8z" fill="#fff"/><path d="M4 3.3L6.2 4.65 4 6z" fill="#8fb0dc"/></svg>
<div class="btn bg" style="left:297.2px;width:18.6px"></div>
<svg class="a" style="left:302px;top:189.3px" width="9" height="8.5" viewBox="0 0 9 8.5"><path d="M0 0.6H9M3.3 3.1H9M3.3 5.4H9M0 7.9H9" stroke="#fff" stroke-width="1.1"/><path d="M0 2.4L2.2 4.25 0 6.1z" fill="#fff"/></svg>
<div class="btn bg" style="left:319.7px;width:18.6px"></div>
<svg class="a" style="left:324.5px;top:189px" width="9" height="9" viewBox="0 0 9 9"><circle cx="3.7" cy="3.7" r="2.8" fill="none" stroke="#fff" stroke-width="1.2"/><path d="M5.8 5.8L8.5 8.5" stroke="#fff" stroke-width="1.4"/></svg>
<div class="btn bg" style="left:342.1px;width:18.6px"></div>
<svg class="a" style="left:346.5px;top:188.8px" width="10" height="9.5" viewBox="0 0 10 10"><path d="M2.2 2.6A4 4 0 1 1 1.2 6" fill="none" stroke="#fff" stroke-width="1.2"/><path d="M0.4 0.8L0.6 3.6 3.3 3.3z" fill="#fff"/><path d="M5.3 3V5.4L6.9 6.6" fill="none" stroke="#fff" stroke-width="1.1"/></svg>
<div class="btn bg" style="left:369.6px;width:18.6px"></div>
<svg class="a" style="left:374px;top:189.6px" width="10.5" height="8.5" viewBox="0 0 576 512" preserveAspectRatio="none"><path fill="#fff" d="M88.7 223.8L0 375.8V96C0 60.7 28.7 32 64 32H181.5c17 0 33.3 6.7 45.3 18.7l26.5 26.5c12 12 28.3 18.7 45.3 18.7H416c35.3 0 64 28.7 64 64v32H144c-22.8 0-43.8 12.1-55.3 31.800zm27.6 16.1C122.1 230 132.6 224 144 224H544c11.5 0 22 6.1 27.7 16.1s5.7 22.2-.1 32.1l-112 192C453.9 474 443.4 480 432 480H32c-11.5 0-22-6.1-27.7-16.1s-5.7-22.2 .1-32.1l112-192z"/></svg>
<div class="btn bg" style="left:392.0px;width:18.6px"></div>
<svg class="a" style="left:396.6px;top:189.2px" width="9.5" height="9" viewBox="0 0 10 9.5"><path d="M5 0.3V5.3M2.6 3.2L5 5.6 7.4 3.2" fill="none" stroke="#fff" stroke-width="1.3"/><path d="M0.3 6.3H3L5 8 7 6.3H9.7V9.3H0.3z" fill="#fff"/></svg>
<div class="btn" style="left:420px;width:38.2px;background:#c9cdd3"></div>
<div class="a" style="left:438.7px;top:184.3px;width:0.8px;height:18.6px;background:#b3b8bf"></div>
<svg class="a" style="left:426px;top:189.5px" width="8" height="8" viewBox="0 0 8 8"><path d="M1 3.6V7.2M3.5 0.8V7.2M6 2V7.2" stroke="#f7f8fa" stroke-width="1.5"/></svg>
<svg class="a" style="left:444px;top:188.8px" width="9" height="9" viewBox="0 0 9 9"><circle cx="3.6" cy="3.6" r="2.7" fill="none" stroke="#f7f8fa" stroke-width="1.2"/><path d="M5.6 5.6L8.2 8.2" stroke="#f7f8fa" stroke-width="1.4"/></svg>
<div class="a" style="left:462.3px;top:189.3px;width:7.6px;height:7.4px;border-radius:1.3px;background:#1560aa"></div>
<svg class="a" style="left:463.7px;top:190.9px" width="5" height="4.2" viewBox="0 0 5 4.2"><path d="M0.5 2.1L1.9 3.5 4.5 0.6" fill="none" stroke="#fff" stroke-width="0.9"/></svg>
<div class="t" style="left:474px;top:188.2px;color:#333;font-size:8.9px">Autocommit</div>
<svg class="a" style="left:529px;top:188px" width="10" height="10" viewBox="529 188 10 10"><circle cx="534.1" cy="193.05" r="2.75" fill="none" stroke="#2db34a" stroke-width="2.6"/></svg>
<div class="t" style="left:541.8px;top:188.5px;color:#333;font-size:8.75px">Idle</div>
<div class="t" style="left:561.3px;top:185.6px;color:#222;font-size:5.85px;line-height:7px"><b>Start time:</b> 2024-07-16, 13:26:04</div>
<div class="t" style="left:561.3px;top:193.9px;color:#222;font-size:5.85px;line-height:7px"><b>Duration:</b> 00:00:01</div>
<div class="btn bb" style="left:721.3px;top:184.2px;width:19.3px;height:18.7px"></div>
<svg class="a" style="left:726.2px;top:189px" width="9.5" height="9" viewBox="0 0 10 9.5"><path d="M5 0.3V5.3M2.6 3.2L5 5.6 7.4 3.2" fill="none" stroke="#fff" stroke-width="1.3"/><path d="M0.3 6.3H3L5 8 7 6.3H9.7V9.3H0.3z" fill="#fff"/></svg>
<div class="a" style="left:744px;top:184.6px;width:49.5px;height:18.7px;border:1px solid #e2e5ea;border-radius:3px;background:#fff"></div>
<div class="t" style="left:750.6px;top:188.8px;color:#222;font-size:8.6px;letter-spacing:-0.55px">CSV</div>
<svg class="a" style="left:777.5px;top:191.8px" width="7.5" height="4.5" viewBox="0 0 7.5 4.5"><path d="M0.5 0.5L3.75 3.8 7 0.5" fill="none" stroke="#222" stroke-width="1.2"/></svg>
<svg class="a" style="left:788.7px;top:213px" width="7.3" height="7" viewBox="0 0 7.3 7"><path d="M0.4 2.3V0.4H2.4M4.9 0.4H6.9V2.3M6.9 4.7V6.6H4.9M2.4 6.6H0.4V4.7" fill="none" stroke="#444" stroke-width="0.9"/></svg>
<div class="t" style="left:256.6px;top:212.2px;color:#222;font-size:8.9px">Data</div>
<div class="t" style="left:294.6px;top:212.2px;color:#222;font-size:8.6px">Messages</div>
<div class="t" style="left:352.8px;top:212.2px;color:#222;font-size:8.5px">Explain</div>
<div class="a" style="left:247.8px;top:225.6px;width:38px;height:1.5px;background:#1560aa"></div>
<svg class="a" style="left:263.8px;top:235px" width="2" height="7" viewBox="0 0 2 7"><circle cx="1" cy="1" r="0.7" fill="#555"/><circle cx="1" cy="3.5" r="0.7" fill="#555"/><circle cx="1" cy="6" r="0.7" fill="#555"/></svg>
<div class="a" style="left:248px;top:225px;width:543px;height:262px;overflow:hidden">
<div class="hd" style="left:45.40px;top:6.60px">customerid</div>
<div class="ty" style="left:45.40px;top:17.00px">integer</div>
<div class="hd" style="left:99.80px;top:6.60px">firstname</div>
<div class="ty" style="left:99.80px;top:17.00px">character varying</div>
<div class="hd" style="left:166.00px;top:6.60px">lastname</div>
<div class="ty" style="left:166.00px;top:17.00px">character varying</div>
<div class="hd" style="left:233.25px;top:6.60px">address1</div>
<div class="ty" style="left:233.25px;top:17.00px">character varying</div>
<div class="hd" style="left:330.25px;top:6.60px">address2</div>
<div class="ty" style="left:330.25px;top:17.00px">character varying</div>
<div class="hd" style="left:397.00px;top:6.60px">city</div>
<div class="ty" style="left:397.00px;top:17.00px">character varying</div>
<div class="hd" style="left:464.00px;top:6.60px">state</div>
<div class="ty" style="left:464.00px;top:17.00px">character varying</div>
<div class="hd" style="left:531.00px;top:6.60px">zip</div>
<div class="ty" style="left:531.00px;top:17.00px">integer</div>
<div class="a" style="left:0;top:47.750px;width:543px;height:20.875px;background:#f1f4f9"></div>
<div class="a" style="left:0;top:89.500px;width:543px;height:20.875px;background:#f1f4f9"></div>
<div class="a" style="left:0;top:131.250px;width:543px;height:20.875px;background:#f1f4f9"></div>
<div class="a" style="left:0;top:173.000px;width:543px;height:20.875px;background:#f1f4f9"></div>
<div class="a" style="left:0;top:214.750px;width:543px;height:20.875px;background:#f1f4f9"></div>
<div class="a" style="left:0;top:256.500px;width:543px;height:20.875px;background:#f1f4f9"></div>
<div class="rn" style="left:8.50px;top:33.73px">1</div>
<div class="c" style="left:44.90px;top:33.73px">19050</div>
<div class="c" style="left:99.00px;top:33.73px">DWUHSK</div>
<div class="c" style="left:165.50px;top:33.73px">OWHKDVTRCI</div>
<div class="c" style="left:232.60px;top:33.73px">5534018486 Dell Way</div>
<div class="nl" style="left:330.20px;top:34.93px">[null]</div>
<div class="c" style="left:396.40px;top:33.73px">GGMTZGG</div>
<div class="nl" style="left:464.00px;top:34.93px">[null]</div>
<div class="c" style="left:530.00px;top:33.73px">0</div>
<div class="rn" style="left:8.50px;top:54.60px">2</div>
<div class="c" style="left:44.90px;top:54.60px">10050</div>
<div class="c" style="left:99.00px;top:54.60px">VVRAMT</div>
<div class="c" style="left:165.50px;top:54.60px">NLLQIXUAEV</div>
<div class="c" style="left:232.60px;top:54.60px">6385936927 Dell Way</div>
<div class="nl" style="left:330.20px;top:55.80px">[null]</div>
<div class="c" style="left:396.40px;top:54.60px">FFOTXKV</div>
<div class="nl" style="left:464.00px;top:55.80px">[null]</div>
<div class="c" style="left:530.00px;top:54.60px">0</div>
<div class="rn" style="left:8.50px;top:75.47px">3</div>
<div class="c" style="left:44.90px;top:75.47px">10051</div>
<div class="c" style="left:99.00px;top:75.47px">RADETR</div>
<div class="c" style="left:165.50px;top:75.47px">PEHYCBYHXE</div>
<div class="c" style="left:232.60px;top:75.47px">9804240555 Dell Way</div>
<div class="nl" style="left:330.20px;top:76.67px">[null]</div>
<div class="c" style="left:396.40px;top:75.47px">MLYJWTA</div>
<div class="nl" style="left:464.00px;top:76.67px">[null]</div>
<div class="c" style="left:530.00px;top:75.47px">0</div>
<div class="rn" style="left:8.50px;top:96.35px">4</div>
<div class="c" style="left:44.90px;top:96.35px">10052</div>
<div class="c" style="left:99.00px;top:96.35px">WMWQDL</div>
<div class="c" style="left:165.50px;top:96.35px">VLKYNJFKNS</div>
<div class="c" style="left:232.60px;top:96.35px">3324043716 Dell Way</div>
<div class="nl" style="left:330.20px;top:97.55px">[null]</div>
<div class="c" style="left:396.40px;top:96.35px">WMBTGCF</div>
<div class="nl" style="left:464.00px;top:97.55px">[null]</div>
<div class="c" style="left:530.00px;top:96.35px">0</div>
<div class="rn" style="left:8.50px;top:117.22px">5</div>
<div class="c" style="left:44.90px;top:117.22px">10053</div>
<div class="c" style="left:99.00px;top:117.22px">IWCMIX</div>
<div class="c" style="left:165.50px;top:117.22px">XTVLCBWPTS</div>
<div class="c" style="left:232.60px;top:117.22px">4597893572 Dell Way</div>
<div class="nl" style="left:330.20px;top:118.42px">[null]</div>
<div class="c" style="left:396.40px;top:117.22px">CVMIXRO</div>
<div class="nl" style="left:464.00px;top:118.42px">[null]</div>
<div class="c" style="left:530.00px;top:117.22px">0</div>
<div class="rn" style="left:8.50px;top:138.10px">6</div>
<div class="c" style="left:44.90px;top:138.10px">10054</div>
<div class="c" style="left:99.00px;top:138.10px">IMRRKP</div>
<div class="c" style="left:165.50px;top:138.10px">KFAMHWCAPE</div>
<div class="c" style="left:232.60px;top:138.10px">2017872509 Dell Way</div>
<div class="nl" style="left:330.20px;top:139.30px">[null]</div>
<div class="c" style="left:396.40px;top:138.10px">WBNTTCX</div>
<div class="nl" style="left:464.00px;top:139.30px">[null]</div>
<div class="c" style="left:530.00px;top:138.10px">0</div>
<div class="rn" style="left:8.50px;top:158.97px">7</div>
<div class="c" style="left:44.90px;top:158.97px">10055</div>
<div class="c" style="left:99.00px;top:158.97px">ZWVJLG</div>
<div class="c" style="left:165.50px;top:158.97px">PLSWIVXXAT</div>
<div class="c" style="left:232.60px;top:158.97px">8353687536 Dell Way</div>
<div class="nl" style="left:330.20px;top:160.17px">[null]</div>
<div class="c" style="left:396.40px;top:158.97px">ZNNSPLW</div>
<div class="nl" style="left:464.00px;top:160.17px">[null]</div>
<div class="c" style="left:530.00px;top:158.97px">0</div>
<div class="rn" style="left:8.50px;top:179.85px">8</div>
<div class="c" style="left:44.90px;top:179.85px">10056</div>
<div class="c" style="left:99.00px;top:179.85px">SQVEWK</div>
<div class="c" style="left:165.50px;top:179.85px">PPHYKFWKZV</div>
<div class="c" style="left:232.60px;top:179.85px">4202817306 Dell Way</div>
<div class="nl" style="left:330.20px;top:181.05px">[null]</div>
<div class="c" style="left:396.40px;top:179.85px">XNNNYKG</div>
<div class="nl" style="left:464.00px;top:181.05px">[null]</div>
<div class="c" style="left:530.00px;top:179.85px">0</div>
<div class="rn" style="left:8.50px;top:200.72px">9</div>
<div class="c" style="left:44.90px;top:200.72px">10057</div>
<div class="c" style="left:99.00px;top:200.72px">VCRSNH</div>
<div class="c" style="left:165.50px;top:200.72px">HVGRACCAXA</div>
<div class="c" style="left:232.60px;top:200.72px">7282172787 Dell Way</div>
<div class="nl" style="left:330.20px;top:201.92px">[null]</div>
<div class="c" style="left:396.40px;top:200.72px">NLNMVTG</div>
<div class="nl" style="left:464.00px;top:201.92px">[null]</div>
<div class="c" style="left:530.00px;top:200.72px">0</div>
<div class="rn" style="left:8.50px;top:221.60px">10</div>
<div class="c" style="left:44.90px;top:221.60px">10058</div>
<div class="c" style="left:99.00px;top:221.60px">JSKWAS</div>
<div class="c" style="left:165.50px;top:221.60px">RGJSJLSGMF</div>
<div class="c" style="left:232.60px;top:221.60px">6243641837 Dell Way</div>
<div class="nl" style="left:330.20px;top:222.80px">[null]</div>
<div class="c" style="left:396.40px;top:221.60px">RZSNTYS</div>
<div class="nl" style="left:464.00px;top:222.80px">[null]</div>
<div class="c" style="left:530.00px;top:221.60px">0</div>
<div class="rn" style="left:8.50px;top:242.47px">11</div>
<div class="c" style="left:44.90px;top:242.47px">10059</div>
<div class="c" style="left:99.00px;top:242.47px">SOFTGX</div>
<div class="c" style="left:165.50px;top:242.47px">AQQJCIQOOI</div>
<div class="c" style="left:232.60px;top:242.47px">3091990710 Dell Way</div>
<div class="nl" style="left:330.20px;top:243.67px">[null]</div>
<div class="c" style="left:396.40px;top:242.47px">OGVIENT</div>
<div class="nl" style="left:464.00px;top:243.67px">[null]</div>
<div class="c" style="left:530.00px;top:242.47px">0</div>
</div>
<div class="a" style="left:791.5px;top:252px;width:4px;height:8.5px;background:#c3c7cd;border-radius:1px"></div>
<div class="a" style="left:248px;top:486.9px;width:217.6px;height:3.7px;border-radius:2px;background:#c3c7cd"></div>
<div class="a" style="left:400px;top:491.5px;width:31px;height:12px;border-radius:3px;background:#727a8a"></div>
<svg class="a" style="left:413.5px;top:493.2px" width="4" height="5" viewBox="0 0 4 5"><path d="M0.3 0.3H3.7L2 2zM0.3 4.7H3.7L2 3z" fill="#fff"/></svg>
<div class="a" style="left:770.8px;top:470.8px;width:24.5px;height:24.5px;border-radius:50%;background:#fff"></div>
<div class="a" style="left:771.8px;top:471.8px;width:22.5px;height:22.5px;border-radius:50%;background:#1560aa"></div>
<svg class="a" style="left:779px;top:476px" width="9" height="14" viewBox="779 476 9 14"><circle cx="783.3" cy="479.4" r="1.25" fill="#fff"/><path d="M780.9 481.6H784.5V486.7H785.7V488.6H780.7V486.7H781.9V483.4H780.9Z" fill="#fff"/></svg>
</body></html>
